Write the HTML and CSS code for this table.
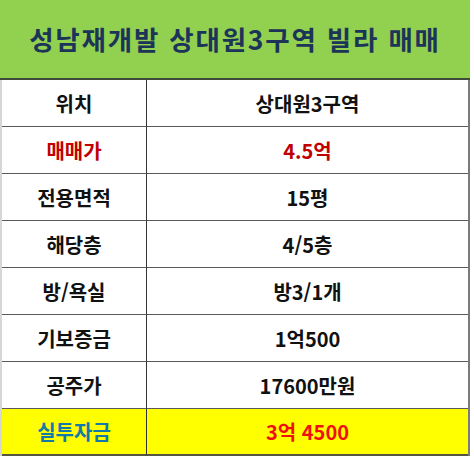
FILE: index.html
```html
<!DOCTYPE html>
<html lang="ko">
<head>
<meta charset="utf-8">
<link rel="stylesheet" href="styles.css">
</head>
<body>
<div class="sheet">
  <div class="title">성남재개발 상대원3구역 빌라 매매</div>
  <div class="grid">
    <div class="cell key">위치</div><div class="cell val">상대원3구역</div>
    <div class="cell key red">매매가</div><div class="cell val red">4.5억</div>
    <div class="cell key">전용면적</div><div class="cell val">15평</div>
    <div class="cell key">해당층</div><div class="cell val">4/5층</div>
    <div class="cell key">방/욕실</div><div class="cell val">방3/1개</div>
    <div class="cell key">기보증금</div><div class="cell val">1억500</div>
    <div class="cell key">공주가</div><div class="cell val">17600만원</div>
    <div class="cell key hl blue">실투자금</div><div class="cell val hl bright">3억 4500</div>
  </div>
</div>
</body>
</html>
```
FILE: styles.css
```css
html, body {
  margin: 0;
  padding: 0;
  background: #ffffff;
}
body {
  width: 474px;
  height: 460px;
  overflow: hidden;
  font-family: "Noto Sans CJK KR", "Noto Sans", sans-serif;
  font-weight: 700;
  color: #111111;
}
.sheet {
  width: 470px;
  border-left: 2px solid #d4d8d4;
  box-sizing: border-box;
}
.title {
  height: 80px;
  margin-left: -2px;
  width: 470px;
  background: #92d050;
  color: #1c3458;
  font-size: 26.5px;
  letter-spacing: 1.8px;
  display: flex;
  align-items: center;
  justify-content: center;
  box-sizing: border-box;
  border-bottom: 2px solid #3e4a3a;
  padding-bottom: 2px;
}
.grid {
  display: grid;
  grid-template-columns: 145px 1fr;
  grid-auto-rows: 47px;
  border-right: 2px solid #7a7a7a;
}
.cell {
  display: flex;
  align-items: center;
  justify-content: center;
  font-size: 20px;
  border-bottom: 1.5px solid #5a5a5a;
  box-sizing: border-box;
  background: #ffffff;
}
.key {
  border-right: 1.5px solid #333333;
}
.red { color: #c00000; }
.hl { background: #ffff00; border-bottom: 2px solid #555544; }
.blue { color: #1478a8; }
.bright { color: #f01010; }
```
